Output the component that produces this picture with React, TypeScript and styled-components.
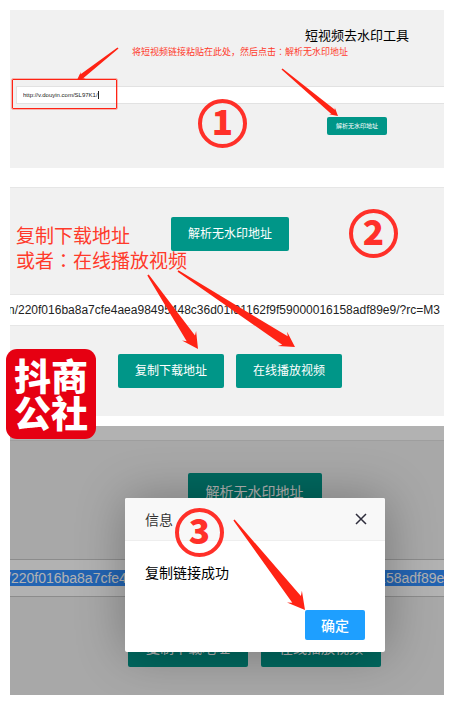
import React from "react";
import styled, { createGlobalStyle } from "styled-components";

const GlobalStyle = createGlobalStyle`
  *, *::before, *::after { box-sizing: border-box; }
  body {
    margin: 0;
    background: #fff;
    color: #000;
    font-family: "Liberation Sans", "Noto Sans CJK SC", sans-serif;
  }
  button, input { font-family: inherit; margin: 0; }
`;

const RED = "#ff2314";

const Page = styled.main`
  padding: 10px;
`;

const Step = styled.section<{ $gap?: number }>`
  position: relative;
  margin-top: ${(p) => p.$gap ?? 0}px;
`;

const Panel = styled.div<{ $shift: number; $ruled?: boolean }>`
  display: flex;
  flex-direction: column;
  overflow: hidden;
  background: #f1f1f1;
  border-top: ${(p) => (p.$ruled ? "1px solid #e6e6e6" : "none")};
  --shift: ${(p) => p.$shift}px;
`;

const Row = styled.div<{ $top: number; $bottom?: number; $gap?: number }>`
  display: flex;
  justify-content: center;
  gap: ${(p) => p.$gap ?? 0}px;
  padding: ${(p) => p.$top}px 0 ${(p) => p.$bottom ?? 0}px var(--shift);
`;

const Title = styled.h1`
  margin: 0;
  font-size: 13px;
  line-height: 20px;
  font-weight: 400;
  white-space: nowrap;
`;

const sizes = {
  small: { font: 6, height: 18, pad: 9 },
  medium: { font: 12, height: 34, pad: 17 },
  large: { font: 14, height: 38, pad: 18 },
};

const ActionButton = styled.button<{ $size: keyof typeof sizes }>`
  height: ${(p) => sizes[p.$size].height}px;
  padding: 0 ${(p) => sizes[p.$size].pad}px;
  border: 0;
  border-radius: 2px;
  background: #009688;
  color: #fff;
  font-size: ${(p) => sizes[p.$size].font}px;
  line-height: ${(p) => sizes[p.$size].height}px;
  white-space: nowrap;
  cursor: pointer;
`;

const Field = styled.div<{ $height: number; $line: string; $top: number; $inset?: boolean }>`
  display: flex;
  align-items: center;
  height: ${(p) => p.$height}px;
  margin-top: ${(p) => p.$top}px;
  margin-left: ${(p) => (p.$inset ? 6 : 0)}px;
  padding-left: ${(p) => (p.$inset ? 6 : 0)}px;
  background: #fff;
  border: 0 solid ${(p) => p.$line};
  border-width: 1px 0 1px ${(p) => (p.$inset ? 1 : 0)}px;
`;

const UrlInput = styled.input`
  width: 100%;
  height: 16px;
  padding: 0;
  border: 0;
  outline: 0;
  background: transparent;
  color: #222;
  font-size: 12px;
  text-indent: -2px;
`;

const ShortUrlInput = styled(UrlInput)`
  field-sizing: content;
  width: auto;
  font-size: 6px;
  text-indent: 0;
`;

const SelectedInput = styled(UrlInput)`
  background: #3390ff;
  color: #fff;
  font-size: 14px;
  text-indent: -3px;
`;

const Caret = styled.span`
  width: 1px;
  height: 8px;
  background: #222;
`;

const Strip = styled.div`
  height: 15px;
  background: #fff;
  border-bottom: 1px solid #e2e2e2;
`;

const Shade = styled.div`
  position: absolute;
  inset: 0;
  background: rgba(0, 0, 0, 0.3);
  overflow: hidden;
`;

const Dialog = styled.div`
  position: absolute;
  top: 72px;
  left: calc(50% - 102px);
  width: 260px;
  background: #fff;
  border-radius: 2px;
  box-shadow: 1px 1px 50px rgba(0, 0, 0, 0.3);
  font-size: 14px;
`;

const DialogHead = styled.header`
  display: flex;
  align-items: center;
  justify-content: space-between;
  height: 43px;
  padding: 0 17px 0 20px;
  border-bottom: 1px solid #eee;
  border-radius: 2px 2px 0 0;
  background: #f8f8f8;
  color: #333;
`;

const DialogTitle = styled.h2`
  margin: 0;
  font-size: 14px;
  font-weight: 400;
`;

const CloseButton = styled.button`
  display: flex;
  padding: 0;
  border: 0;
  background: none;
  color: #2e2d3c;
  cursor: pointer;
`;

const DialogBody = styled.p`
  margin: 0;
  padding: 20px 20px 25px;
  line-height: 24px;
`;

const DialogFoot = styled.footer`
  display: flex;
  justify-content: flex-end;
  padding: 0 20px 12px;
`;

const ConfirmButton = styled.button`
  width: 60px;
  height: 30px;
  padding: 0;
  border: 0;
  border-radius: 2px;
  background: #1e9fff;
  color: #fff;
  font-size: 14px;
  font-weight: 500;
  cursor: pointer;
`;

const Note = styled.p<{ $x: number; $y: number; $size: number; $line: number }>`
  position: absolute;
  left: ${(p) => p.$x}px;
  top: ${(p) => p.$y}px;
  margin: 0;
  color: #ff3a2b;
  font-size: ${(p) => p.$size}px;
  line-height: ${(p) => p.$line}px;
  white-space: nowrap;
  pointer-events: none;
`;

const Colon = styled.span`
  font-family: "Noto Sans CJK TC", sans-serif;
  line-height: 1;
`;

const StepNumber = styled.span<{ $x: number; $y: number }>`
  position: absolute;
  left: ${(p) => p.$x}px;
  top: ${(p) => p.$y}px;
  display: flex;
  align-items: flex-start;
  justify-content: center;
  width: 49px;
  height: 49px;
  border: 4px solid #ff3029;
  border-radius: 50%;
  color: #ff3029;
  font-family: "Noto Sans CJK SC", sans-serif;
  font-size: 35px;
  line-height: 33px;
  font-weight: 900;
  pointer-events: none;
`;

const Highlight = styled.div`
  position: absolute;
  left: 2px;
  top: 69px;
  width: 105px;
  height: 30px;
  border: 1px solid ${RED};
  outline: 1px solid rgba(255, 35, 20, 0.3);
  border-radius: 1px;
  pointer-events: none;
`;

const Overlay = styled.svg`
  position: absolute;
  left: 0;
  top: 0;
  overflow: visible;
  pointer-events: none;
`;

const Logo = styled.div`
  position: absolute;
  z-index: 2;
  left: -4px;
  bottom: -23px;
  display: grid;
  grid-template-columns: 37px 37px;
  grid-auto-rows: 37px;
  place-content: center;
  place-items: center;
  width: 90px;
  height: 90px;
  border-radius: 11px;
  background: #e60012;
  color: #fff;
  font-family: "Noto Sans CJK SC", sans-serif;
  font-size: 37px;
  line-height: 37px;
  font-weight: 900;
`;

type ArrowProps = {
  from: [number, number];
  to: [number, number];
  neck: number;
  barb: number;
  head: number;
};

function Arrow({ from, to, neck, barb, head }: ArrowProps) {
  const dx = to[0] - from[0];
  const dy = to[1] - from[1];
  const length = Math.hypot(dx, dy);
  const ux = dx / length;
  const uy = dy / length;
  const at = (along: number, side: number) =>
    `${(from[0] + ux * along - uy * side).toFixed(1)},${(from[1] + uy * along + ux * side).toFixed(1)}`;
  const points = [
    at(0, 0.8),
    at(length - head * 0.8, neck),
    at(length - head, barb),
    at(length, 0),
    at(length - head, -barb),
    at(length - head * 0.8, -neck),
    at(0, -0.8),
  ].join(" ");
  return <polygon points={points} fill={RED} />;
}

export default function App() {
  return (
    <>
      <GlobalStyle />
      <Page>
        <Step>
          <Panel $shift={260}>
            <Row $top={16}>
              <Title>短视频去水印工具</Title>
            </Row>
            <Field $height={18} $line="#e2e2e2" $top={40} $inset>
              <ShortUrlInput aria-label="短视频链接" defaultValue="http://v.douyin.com/SL97K1/" />
              <Caret />
            </Field>
            <Row $top={13} $bottom={33}>
              <ActionButton $size="small">解析无水印地址</ActionButton>
            </Row>
          </Panel>
          <Note $x={122} $y={34} $size={9} $line={16}>
            将短视频链接粘贴在此处，然后点击<Colon>：</Colon>解析无水印地址
          </Note>
          <Highlight />
          <StepNumber $x={188} $y={89}>1</StepNumber>
          <Overlay width="1" height="1" aria-hidden="true">
            <Arrow from={[108, 38]} to={[67, 70]} neck={2.4} barb={4} head={8} />
            <Arrow from={[272, 59]} to={[328, 106]} neck={2.8} barb={4.5} head={8} />
          </Overlay>
        </Step>

        <Step $gap={19}>
          <Panel $shift={6} $ruled>
            <Row $top={29}>
              <ActionButton $size="medium">解析无水印地址</ActionButton>
            </Row>
            <Field $height={32} $line="#e6e6e6" $top={43}>
              <UrlInput
                aria-label="无水印地址"
                defaultValue="n/220f016ba8a7cfe4aea98495448c36d01f81162f9f59000016158adf89e9/?rc=M3"
              />
            </Field>
            <Row $top={28} $bottom={28} $gap={12}>
              <ActionButton $size="medium">复制下载地址</ActionButton>
              <ActionButton $size="medium">在线播放视频</ActionButton>
            </Row>
          </Panel>
          <Note $x={6} $y={37} $size={19} $line={25}>
            复制下载地址
            <br />
            或者<Colon>：</Colon>在线播放视频
          </Note>
          <StepNumber $x={339} $y={22}>2</StepNumber>
          <Overlay width="1" height="1" aria-hidden="true">
            <Arrow from={[138, 88]} to={[188, 162]} neck={5} barb={8.5} head={16} />
            <Arrow from={[168, 84]} to={[285, 160]} neck={5} barb={8.5} head={15} />
          </Overlay>
          <Logo role="img" aria-label="抖商公社">
            <span>抖</span>
            <span>商</span>
            <span>公</span>
            <span>社</span>
          </Logo>
        </Step>

        <Step $gap={10}>
          <Panel $shift={55}>
            <Strip />
            <Row $top={32}>
              <ActionButton $size="large">解析无水印地址</ActionButton>
            </Row>
            <Field $height={38} $line="#c9c9c9" $top={48}>
              <SelectedInput
                aria-label="已复制的地址"
                defaultValue="/220f016ba8a7cfe4aea98495448c36d01f81162f9f59000016158adf89e9/?rc=M3"
              />
            </Field>
            <Row $top={32} $bottom={28} $gap={13}>
              <ActionButton $size="large">复制下载地址</ActionButton>
              <ActionButton $size="large">在线播放视频</ActionButton>
            </Row>
          </Panel>
          <Shade>
            <Dialog role="dialog" aria-labelledby="dialog-title">
              <DialogHead>
                <DialogTitle id="dialog-title">信息</DialogTitle>
                <CloseButton aria-label="关闭">
                  <svg width="14" height="14" viewBox="0 0 14 14" stroke="currentColor" strokeWidth="1.5">
                    <path d="M2 2l10 10M12 2L2 12" />
                  </svg>
                </CloseButton>
              </DialogHead>
              <DialogBody>复制链接成功</DialogBody>
              <DialogFoot>
                <ConfirmButton>确定</ConfirmButton>
              </DialogFoot>
            </Dialog>
          </Shade>
          <StepNumber $x={165} $y={82}>3</StepNumber>
          <Overlay width="1" height="1" aria-hidden="true">
            <Arrow from={[224, 94]} to={[295, 184]} neck={5.5} barb={9.5} head={17} />
          </Overlay>
        </Step>
      </Page>
    </>
  );
}
